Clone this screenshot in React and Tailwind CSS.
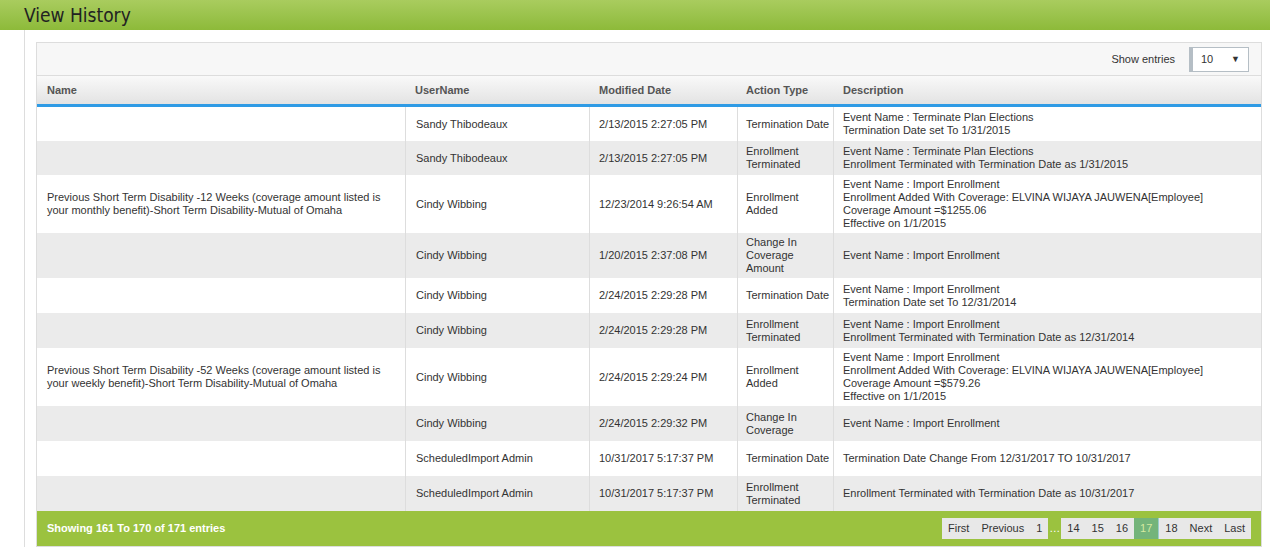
export default function App() {
  const rows = [
    ["", "Sandy Thibodeaux", "2/13/2015 2:27:05 PM", ["Termination Date"], ["Event Name : Terminate Plan Elections", "Termination Date set To 1/31/2015"], "h-[34px]"],
    ["", "Sandy Thibodeaux", "2/13/2015 2:27:05 PM", ["Enrollment", "Terminated"], ["Event Name : Terminate Plan Elections", "Enrollment Terminated with Termination Date as 1/31/2015"], "h-[34px]"],
    ["Previous Short Term Disability -12 Weeks (coverage amount listed is your monthly benefit)-Short Term Disability-Mutual of Omaha", "Cindy Wibbing", "12/23/2014 9:26:54 AM", ["Enrollment", "Added"], ["Event Name : Import Enrollment", "Enrollment Added With Coverage: ELVINA WIJAYA JAUWENA[Employee]", "Coverage Amount =$1255.06", "Effective on 1/1/2015"], "h-[58px]"],
    ["", "Cindy Wibbing", "1/20/2015 2:37:08 PM", ["Change In", "Coverage", "Amount"], ["Event Name : Import Enrollment"], "h-[45px]"],
    ["", "Cindy Wibbing", "2/24/2015 2:29:28 PM", ["Termination Date"], ["Event Name : Import Enrollment", "Termination Date set To 12/31/2014"], "h-[35px]"],
    ["", "Cindy Wibbing", "2/24/2015 2:29:28 PM", ["Enrollment", "Terminated"], ["Event Name : Import Enrollment", "Enrollment Terminated with Termination Date as 12/31/2014"], "h-[35px]"],
    ["Previous Short Term Disability -52 Weeks (coverage amount listed is your weekly benefit)-Short Term Disability-Mutual of Omaha", "Cindy Wibbing", "2/24/2015 2:29:24 PM", ["Enrollment", "Added"], ["Event Name : Import Enrollment", "Enrollment Added With Coverage: ELVINA WIJAYA JAUWENA[Employee]", "Coverage Amount =$579.26", "Effective on 1/1/2015"], "h-[58px]"],
    ["", "Cindy Wibbing", "2/24/2015 2:29:32 PM", ["Change In", "Coverage"], ["Event Name : Import Enrollment"], "h-[35px]"],
    ["", "ScheduledImport Admin", "10/31/2017 5:17:37 PM", ["Termination Date"], ["Termination Date Change From 12/31/2017 TO 10/31/2017"], "h-[35px]"],
    ["", "ScheduledImport Admin", "10/31/2017 5:17:37 PM", ["Enrollment", "Terminated"], ["Enrollment Terminated with Termination Date as 10/31/2017"], "h-[35px]"],
  ];
  const cols = "grid grid-cols-[369px_184px_148px_96px_1fr]";
  return (
    <div className="w-[1270px] h-[557px] bg-white overflow-hidden text-[#333] text-[11px] leading-[13px]" style={{ fontFamily: '"Liberation Sans", Arial, sans-serif' }}>
      <div className="h-[30px] bg-gradient-to-b from-[#a9cc5e] to-[#8dba39] pl-[24px] flex items-center text-[19px] text-[#222]" style={{ fontFamily: 'Tahoma, "DejaVu Sans Condensed", "Liberation Sans", sans-serif' }}>View History</div>
      <div className="ml-[24px] border-l border-[#ddd] pl-[11px] pt-[12px] pr-[8px]">
        <div className="border border-[#ddd]">
          <div className="h-[33px] bg-[#f7f7f7] flex items-center justify-end pr-[12px] gap-[14px] border-b border-[#ddd]">
            <span>Show entries</span>
            <div className="w-[60px] h-[25px] bg-white border border-[#b5bec5] border-l-[4px] flex items-center justify-between px-[8px]">
              <span>10</span><span className="text-[9px]">▼</span>
            </div>
          </div>
          <div className={`${cols} h-[31px] items-center bg-gradient-to-b from-[#f9f9f9] to-[#e3e3e3] border-b-[3px] border-[#2f9be5] font-bold text-[#555]`}>
            <div className="pl-[10px]">Name</div><div className="pl-[9px]">UserName</div><div className="pl-[9px]">Modified Date</div><div className="pl-[8px]">Action Type</div><div className="pl-[9px]">Description</div>
          </div>
          {rows.map((r, i) => (
            <div key={i} className={`${cols} ${r[5]} ${i % 2 ? "bg-[#ebebeb]" : "bg-white"}`}>
              <div className="pl-[10px] pr-[2px] flex items-center border-r border-[#ddd]">{r[0]}</div>
              <div className="pl-[10px] flex items-center border-r border-[#ddd]">{r[1]}</div>
              <div className="pl-[9px] flex items-center border-r border-[#ddd]">{r[2]}</div>
              <div className="pl-[8px] flex flex-col justify-center border-r border-[#ddd]">{r[3].map((t, j) => <div key={j}>{t}</div>)}</div>
              <div className="pl-[9px] flex flex-col justify-center">{r[4].map((t, j) => <div key={j}>{t}</div>)}</div>
            </div>
          ))}
          <div className="h-[35px] bg-[#9bc23f] flex items-center justify-between pl-[10px] pr-[10px] text-white font-bold">
            <span>Showing 161 To 170 of 171 entries</span>
            <div className="flex items-center text-[#333] font-normal text-[11px]">
              <div className="flex bg-[#e8e8e8] h-[21px] items-center">
                <span className="px-[6px]">First</span><span className="px-[6px]">Previous</span><span className="px-[6px]">1</span>
              </div>
              <span className="text-white px-[1px]">…</span>
              <div className="flex bg-[#e8e8e8] h-[21px] items-center">
                <span className="px-[6px]">14</span><span className="px-[6px]">15</span><span className="px-[6px]">16</span>
                <span className="px-[6px] h-full flex items-center bg-[#74b47a] text-[#d6eaa0] border-r border-[#9cc]">17</span>
                <span className="px-[6px]">18</span><span className="px-[6px]">Next</span><span className="px-[6px]">Last</span>
              </div>
            </div>
          </div>
        </div>
      </div>
    </div>
  );
}
